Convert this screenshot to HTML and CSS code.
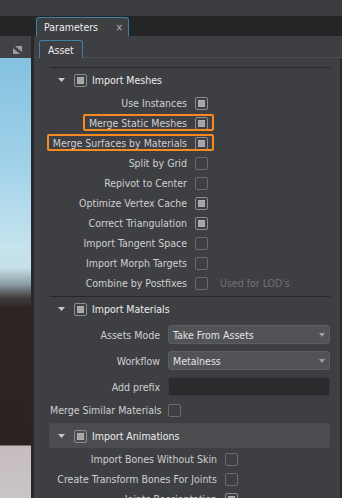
FILE: index.html
```html
<!DOCTYPE html>
<html>
<head>
<meta charset="utf-8">
<title>Parameters</title>
<link rel="stylesheet" href="styles.css">
</head>
<body>
<div class="menubar"></div>
<div class="dockbar">
  <div class="dock-tab"><span>Parameters</span><span class="close">×</span></div>
</div>
<div class="workspace">
  <div class="viewport">
    <div class="vp-head">
      <svg class="vp-icon" width="9" height="8" viewBox="0 0 9 8"><polygon points="2,0 9,0 9,6" fill="#9c9da0"/><polygon points="0,2 0,8 7,8" fill="#9c9da0"/></svg>
    </div>
    <div class="vp-view"></div>
  </div>
  <div class="splitter"></div>
  <div class="params">
    <div class="subtabs"><div class="subtab">Asset</div></div>
    <div class="pane">
      <div class="scroll">
        <section class="group">
          <div class="group-head">
            <svg class="tri" width="7" height="4" viewBox="0 0 7 4"><polygon points="0,0 7,0 3.5,4" fill="#c9c9c9"/></svg>
            <span class="cb on"></span>
            <span class="group-title">Import Meshes</span>
          </div>
          <div class="form form-meshes">
            <span class="lab">Use Instances</span><span class="cb on"></span><span></span>
            <span class="lab"><span class="hl">Merge Static Meshes</span></span><span class="cb on"></span><span></span>
            <span class="lab"><span class="hl">Merge Surfaces by Materials</span></span><span class="cb on"></span><span></span>
            <span class="lab">Split by Grid</span><span class="cb"></span><span></span>
            <span class="lab">Repivot to Center</span><span class="cb"></span><span></span>
            <span class="lab">Optimize Vertex Cache</span><span class="cb on"></span><span></span>
            <span class="lab">Correct Triangulation</span><span class="cb on"></span><span></span>
            <span class="lab">Import Tangent Space</span><span class="cb"></span><span></span>
            <span class="lab">Import Morph Targets</span><span class="cb"></span><span></span>
            <span class="lab">Combine by Postfixes</span><span class="cb"></span><span class="hint">Used for LOD's</span>
          </div>
        </section>
        <section class="group">
          <div class="group-head">
            <svg class="tri" width="7" height="4" viewBox="0 0 7 4"><polygon points="0,0 7,0 3.5,4" fill="#c9c9c9"/></svg>
            <span class="cb on"></span>
            <span class="group-title">Import Materials</span>
          </div>
          <div class="form form-materials">
            <span class="lab">Assets Mode</span>
            <div class="combo"><span>Take From Assets</span><span class="arrow"></span></div>
            <span class="lab">Workflow</span>
            <div class="combo"><span>Metalness</span><span class="arrow"></span></div>
            <span class="lab">Add prefix</span>
            <div class="textfield"></div>
            <span class="lab">Merge Similar Materials</span>
            <span class="cb"></span>
          </div>
        </section>
        <section class="group">
          <div class="group-head hover">
            <svg class="tri" width="7" height="4" viewBox="0 0 7 4"><polygon points="0,0 7,0 3.5,4" fill="#c9c9c9"/></svg>
            <span class="cb on"></span>
            <span class="group-title">Import Animations</span>
          </div>
          <div class="form form-anim">
            <span class="lab">Import Bones Without Skin</span><span class="cb"></span>
            <span class="lab">Create Transform Bones For Joints</span><span class="cb"></span>
            <span class="lab">Joints Reorientation</span><span class="cb on"></span>
          </div>
        </section>
      </div>
      <div class="scrollbar"></div>
    </div>
  </div>
</div>
</body>
</html>
```
FILE: styles.css
```css
html, body {
  margin: 0;
  padding: 0;
}
body {
  width: 342px;
  height: 498px;
  overflow: hidden;
  background: #3e3f43;
  font-family: "DejaVu Sans Condensed", "DejaVu Sans", sans-serif;
  font-stretch: condensed;
  font-size: 10.5px;
  color: #cfcfd0;
  display: flex;
  flex-direction: column;
}
.menubar {
  height: 16px;
  flex: none;
  background: #3b3c40;
}
.dockbar {
  height: 20px;
  flex: none;
  background: #242527;
  display: flex;
  align-items: flex-end;
  padding-left: 36px;
}
.dock-tab {
  width: 93px;
  height: 19px;
  box-sizing: border-box;
  border: 1px solid #3c82a6;
  border-bottom: none;
  border-radius: 3px 3px 0 0;
  background: #3e3f43;
  color: #ececec;
  display: flex;
  align-items: center;
  justify-content: space-between;
  padding: 0 5px 0 7px;
}
.close {
  color: #b5b5b7;
  font-size: 10px;
}
.workspace {
  flex: 1;
  display: flex;
  min-height: 0;
}
.viewport {
  width: 31px;
  flex: none;
  display: flex;
  flex-direction: column;
}
.vp-head {
  height: 22px;
  flex: none;
  background: #414246;
  display: flex;
  align-items: center;
  justify-content: flex-end;
  padding-right: 9px;
}
.vp-icon {
  display: block;
  margin-top: 6px;
}
.vp-view {
  flex: 1;
  background: linear-gradient(to bottom,
    #84c2e0 0px,
    #a2d2e9 110px,
    #c6e3ee 190px,
    #c4dfe8 210px,
    #8c9ea4 226px,
    #3f3b3b 240px,
    #2c2524 250px,
    #2a2322 387px,
    #c6bebe 388px,
    #cbc4c4 100%);
}
.splitter {
  width: 3px;
  flex: none;
  background: #28292c;
}
.params {
  flex: 1;
  display: flex;
  flex-direction: column;
  min-width: 0;
}
.subtabs {
  height: 22px;
  flex: none;
  box-sizing: border-box;
  display: flex;
  align-items: flex-end;
  padding-left: 5px;
  border-bottom: 1px solid #4b4c50;
}
.subtab {
  width: 44px;
  height: 18px;
  box-sizing: border-box;
  border: 1px solid #3c82a6;
  border-bottom: none;
  border-radius: 3px 3px 0 0;
  background: #3e3f43;
  color: #ececec;
  padding-left: 8px;
  display: flex;
  align-items: center;
  margin-bottom: -1px;
}
.pane {
  flex: 1;
  display: flex;
  min-height: 0;
}
.scroll {
  flex: 1;
  padding: 9px 10px 0 16px;
  overflow: hidden;
}
.scrollbar {
  width: 2px;
  flex: none;
  background: #2a2b2e;
}
.group-head {
  height: 24px;
  border-top: 1px solid #27282b;
  display: flex;
  align-items: center;
  padding-left: 8px;
}
.group-head.hover {
  border-top-color: transparent;
  background: #4b4c50;
  border-radius: 3px;
  margin-left: -1px;
  padding-left: 9px;
}
.tri {
  display: block;
  margin-right: 9px;
}
.group-title {
  margin-left: 5px;
  color: #ececec;
}
.cb {
  width: 13px;
  height: 13px;
  box-sizing: border-box;
  border: 1px solid #6a6b6f;
  border-radius: 2px;
  display: block;
}
.cb.on {
  border-color: #8c8d90;
  padding: 2px;
}
.cb.on::after {
  content: "";
  display: block;
  width: 7px;
  height: 7px;
  box-sizing: border-box;
  background: #a4a4a6;
  border: 1px solid #b0b0b2;
}
.form {
  display: grid;
  column-gap: 8px;
  align-items: center;
}
.lab {
  text-align: right;
  white-space: nowrap;
  line-height: 14px;
}
.form-meshes {
  grid-template-columns: 137px 13px 1fr;
  grid-auto-rows: 20px;
  padding: 1px 0 3px;
}
.hint {
  color: #707175;
  margin-left: 4px;
}
.hl {
  position: relative;
}
.hl::before {
  content: "";
  position: absolute;
  left: -6px;
  right: -27px;
  top: -3px;
  bottom: -2px;
  border: 2px solid #f58a1f;
  border-radius: 2px;
}
.form-materials {
  grid-template-columns: 110px 1fr;
  row-gap: 7px;
  padding: 4px 0 6px;
}
.combo {
  height: 19px;
  box-sizing: border-box;
  background: #525357;
  border: 1px solid #5c5d61;
  border-radius: 3px;
  display: flex;
  align-items: center;
  justify-content: space-between;
  padding: 0 4px 0 4px;
  color: #e2e2e2;
}
.arrow {
  width: 0;
  height: 0;
  border-left: 3.5px solid transparent;
  border-right: 3.5px solid transparent;
  border-top: 4px solid #9d9ea1;
}
.textfield {
  height: 19px;
  box-sizing: border-box;
  background: #2a2b2d;
  border: 1px solid #37383b;
  border-radius: 2px;
}
.form-anim {
  grid-template-columns: 167px 13px;
  grid-auto-rows: 20px;
  padding-top: 1px;
}
```
